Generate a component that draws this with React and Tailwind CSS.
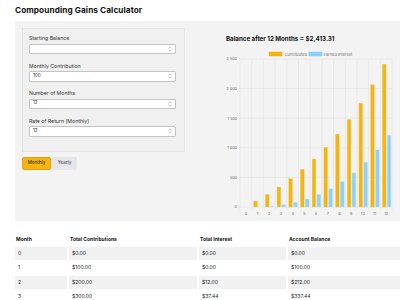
import React from "react";

const rows = (() => {
  const out = [];
  let bal = 0;
  for (let m = 0; m <= 12; m++) {
    if (m > 0) bal = bal * 1.12 + 100;
    const contrib = m * 100;
    out.push({ m, contrib, interest: bal - contrib, bal });
  }
  return out;
})();

const fmt = (v) =>
  "$" + v.toLocaleString("en-US", { minimumFractionDigits: 2, maximumFractionDigits: 2 });

function Spinner() {
  return (
    <svg width="4" height="6" viewBox="0 0 4 6" className="shrink-0">
      <path d="M0.5 2.4 L2 0.8 L3.5 2.4" fill="none" stroke="#9a9a9a" strokeWidth="0.6" />
      <path d="M0.5 3.6 L2 5.2 L3.5 3.6" fill="none" stroke="#9a9a9a" strokeWidth="0.6" />
    </svg>
  );
}

function Field({ label, value }) {
  return (
    <div className="flex flex-col">
      <div className="h-[8px] text-[5.2px] leading-[8px] text-[#333]">{label}</div>
      <div className="mt-[1.5px] h-[10.5px] w-[147px] bg-white border border-[#c4c4c4] rounded-[1px] flex items-center pl-[3px] pr-[3px] justify-between">
        <span className="text-[4.6px] text-[#222]">{value}</span>
        <Spinner />
      </div>
    </div>
  );
}

function Chart() {
  const x0 = 14;
  const cw = 11.7;
  const yZero = 162;
  const scale = 148 / 2500;
  const ticks = [0, 500, 1000, 1500, 2000, 2500];
  const labels = ["0", "500", "1 000", "1 500", "2 000", "2 500"];
  return (
    <svg width="174" height="176" viewBox="0 0 174 176" className="block">
      <rect x="43" y="7" width="13" height="4" fill="#f5b40f" stroke="#e6a600" strokeWidth="0.4" />
      <text x="58.5" y="10.6" fontSize="4" fill="#777">Contributed</text>
      <rect x="83" y="7" width="13" height="4" fill="#8fd0f5" stroke="#6cbde9" strokeWidth="0.4" />
      <text x="97.5" y="10.6" fontSize="4" fill="#777">Earned Interest</text>
      {ticks.map((t, i) => {
        const y = yZero - t * scale;
        return (
          <g key={t}>
            <line x1="11" x2="166" y1={y} y2={y} stroke="#dedede" strokeWidth="0.5" />
            <text x="11" y={y + 1.3} fontSize="3.8" fill="#666" textAnchor="end">
              {labels[i]}
            </text>
          </g>
        );
      })}
      {Array.from({ length: 14 }).map((_, i) => (
        <line
          key={i}
          x1={x0 + i * cw}
          x2={x0 + i * cw}
          y1={14}
          y2={yZero + 3}
          stroke="#dedede"
          strokeWidth="0.5"
        />
      ))}
      {rows.map((r, i) => {
        const c = x0 + cw * i + cw / 2;
        const hb = r.bal * scale;
        const hi = r.interest * scale;
        return (
          <g key={i}>
            {hb > 0 && (
              <rect x={c - 3.9} y={yZero - hb} width="3.7" height={hb} fill="#f5b40f" stroke="#f2d27a" strokeWidth="0.3" />
            )}
            {hi > 0 && (
              <rect x={c + 0.9} y={yZero - hi} width="3.8" height={hi} fill="#8fd0f5" stroke="#c0e3f8" strokeWidth="0.3" />
            )}
            <text x={c} y="169.5" fontSize="3.8" fill="#666" textAnchor="middle">
              {i}
            </text>
          </g>
        );
      })}
    </svg>
  );
}

export default function App() {
  const head = "h-[10px] flex items-center text-[5px] font-bold text-[#111] px-[1px]";
  const cell = "h-[12.5px] flex items-center px-[3px] text-[5px] text-[#222]";
  return (
    <div
      className="w-[400px] h-[300px] overflow-hidden bg-white relative"
      style={{ fontFamily: "Inter, 'Liberation Sans', sans-serif" }}
    >
      <div className="pl-[15px] pt-[4px] h-[21px] text-[8.2px] leading-[12px] font-bold text-[#111] tracking-[0.1px]">
        Compounding Gains Calculator
      </div>
      <div className="ml-[15px] h-[200px] bg-[#f3f3f3] flex">
        <div className="w-[196px] pl-[7px] pt-[7px] flex flex-col">
          <div className="w-[163px] h-[124px] bg-[#f0f0f0] border border-[#e4e4e4] pl-[6px] pt-[5px] flex flex-col gap-[7.5px]">
            <Field label="Starting Balance" value="" />
            <Field label="Monthly Contribution" value="100" />
            <Field label="Number of Months" value="12" />
            <Field label="Rate of Return (Monthly)" value="12" />
          </div>
          <div className="flex gap-[1px] mt-[5px]">
            <div className="w-[29px] h-[13px] rounded-[2px] bg-[#f5b40f] border border-[#e5a500] flex items-center justify-center text-[4.6px] text-[#222]">
              Monthly
            </div>
            <div className="w-[25px] h-[13px] rounded-[2px] bg-[#e6e6ea] flex items-center justify-center text-[4.6px] text-[#333]">
              Yearly
            </div>
          </div>
        </div>
        <div className="flex-1 pl-[15px] pt-[13px] flex flex-col">
          <div className="h-[10px] leading-[10px] text-[6.2px] font-bold text-[#111]">
            Balance after 12 Months = $2,413.31
          </div>
          <div className="mt-[1px]">
            <Chart />
          </div>
        </div>
      </div>
      <div className="ml-[15px] mt-[14px] grid grid-cols-[52px_128px_87px_1fr] gap-x-[2px] gap-y-[2px]">
        <div className={head}>Month</div>
        <div className={head}>Total Contributions</div>
        <div className={`${head} px-[0px]`}>Total Interest</div>
        <div className={head}>Account Balance</div>
        {rows.slice(0, 4).map((r) => {
          const bg = r.m % 2 === 0 ? "bg-[#f1f1f1]" : "bg-white";
          return (
            <React.Fragment key={r.m}>
              <div className={`${cell} ${bg}`}>{r.m}</div>
              <div className={`${cell} ${bg}`}>{fmt(r.contrib)}</div>
              <div className={`${cell} ${bg}`}>{fmt(r.interest)}</div>
              <div className={`${cell} ${bg}`}>{fmt(r.bal)}</div>
            </React.Fragment>
          );
        })}
      </div>
    </div>
  );
}
